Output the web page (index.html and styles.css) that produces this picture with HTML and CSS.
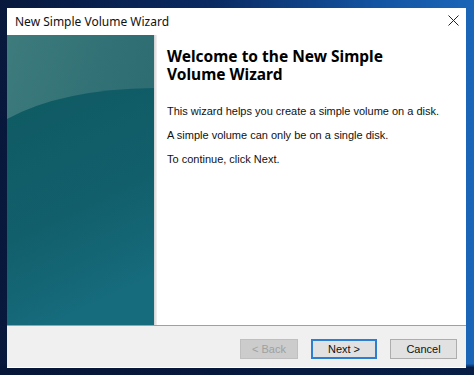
FILE: index.html
```html
<!DOCTYPE html>
<html lang="en">
<head>
  <meta charset="UTF-8">
  <title>New Simple Volume Wizard</title>
  <link rel="stylesheet" href="styles.css">
</head>
<body>
  <div class="window">
    <div class="titlebar">
      <span class="title">New Simple Volume Wizard</span>
      <svg class="close" width="11" height="11" viewBox="0 0 11 11">
        <path d="M0.5 0.5 L10.5 10.5 M10.5 0.5 L0.5 10.5" stroke="#222" stroke-width="1"/>
      </svg>
    </div>

    <div class="main">
      <div class="side">
        <svg width="147" height="290" viewBox="0 0 147 290">
          <defs>
            <linearGradient id="top" x1="0" y1="0" x2="1" y2="0.6">
              <stop offset="0" stop-color="#3d7b7d"/>
              <stop offset="0.5" stop-color="#327175"/>
              <stop offset="1" stop-color="#2b6a70"/>
            </linearGradient>
            <linearGradient id="low" x1="0" y1="0" x2="0.3" y2="1">
              <stop offset="0" stop-color="#0f5a62"/>
              <stop offset="0.6" stop-color="#125f6c"/>
              <stop offset="1" stop-color="#166b7c"/>
            </linearGradient>
          </defs>
          <rect width="147" height="290" fill="url(#top)"/>
          <path d="M0 84 Q 55 54 147 53 L147 290 L0 290 Z" fill="url(#low)"/>
        </svg>
      </div>
      <div class="shade"></div>

      <div class="content">
        <h1>Welcome to the New Simple Volume Wizard</h1>
        <p>This wizard helps you create a simple volume on a disk.</p>
        <p>A simple volume can only be on a single disk.</p>
        <p>To continue, click Next.</p>
      </div>
    </div>

    <div class="footer">
      <button class="btn back" disabled>&lt; Back</button>
      <button class="btn next">Next &gt;</button>
      <button class="btn cancel">Cancel</button>
    </div>
  </div>
</body>
</html>
```

FILE: styles.css
```css
html, body {
  margin: 0;
  height: 100%;
}

body {
  width: 474px;
  height: 375px;
  box-sizing: border-box;
  padding: 8px 0 0 7px;
  overflow: hidden;
  background:
    linear-gradient(to bottom, rgba(6, 22, 56, 0) 97%, rgba(6, 22, 56, 0.9) 98%),
    linear-gradient(to right, #07183c 0%, #0a2a62 45%, #1455a3 80%, #1b66b8 100%);
}

.window {
  width: 459px;
  height: 360px;
  background: #ffffff;
  display: flex;
  flex-direction: column;
}

.titlebar {
  height: 27px;
  display: flex;
  align-items: center;
  justify-content: space-between;
  padding: 0 7px 0 8px;
  font-family: "Noto Sans", "Open Sans", sans-serif;
  font-size: 12px;
  color: #111;
}

.close {
  margin-top: -2px;
}

.main {
  height: 290px;
  display: flex;
}

.side {
  width: 147px;
  height: 290px;
}

.side svg {
  display: block;
}

.shade {
  width: 3px;
  background: linear-gradient(to right, #cfcfcf, #f4f4f4);
}

.content {
  padding: 12px 10px 0 10px;
  font-family: "Liberation Sans", Arial, sans-serif;
  font-size: 11px;
  color: #111;
}

h1 {
  max-width: 235px;
  margin: 0 0 22px;
  font-family: "Noto Sans", "Open Sans", sans-serif;
  font-size: 15.5px;
  line-height: 18px;
  font-weight: bold;
  color: #000;
}

p {
  margin: 0 0 11px;
  line-height: 13px;
}

.footer {
  height: 42px;
  box-sizing: border-box;
  border-top: 1px solid #a0a0a0;
  background: #f0f0f0;
  display: flex;
  justify-content: flex-end;
  align-items: flex-start;
  padding: 13px 9px 0 0;
}

.btn {
  height: 20px;
  margin-left: 13px;
  padding: 0;
  font-family: "Liberation Sans", Arial, sans-serif;
  font-size: 11px;
  color: #111;
  background: #e1e1e1;
  border: 1px solid #adadad;
}

.back {
  width: 58px;
  color: #a0a0a0;
  background: #cccccc;
  border-color: #bfbfbf;
}

.next {
  width: 66px;
  border: 2px solid #2c7fd0;
}

.cancel {
  width: 67px;
}
```
